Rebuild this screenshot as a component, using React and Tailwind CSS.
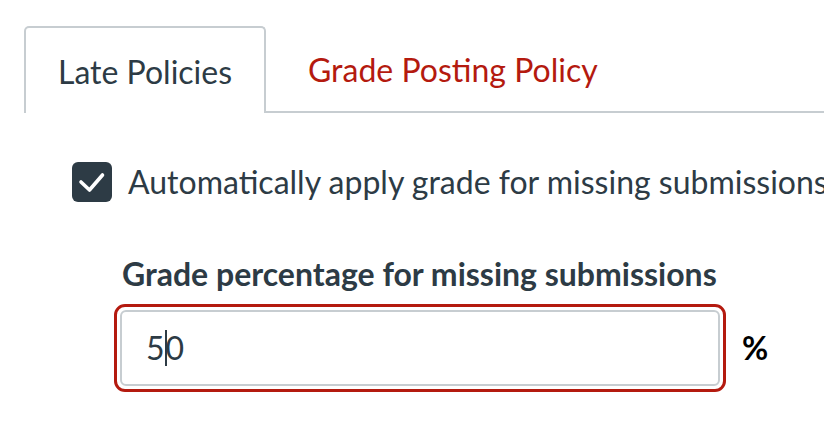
export default function App() {
  return (
    <div className="w-[824px] h-[442px] bg-white overflow-hidden" style={{ fontFamily: "Lato, 'Noto Sans', sans-serif" }}>
      <div className="pt-[26px] pl-[24px] flex items-end">
        <div className="h-[87px] w-[242px] border-[2px] border-b-0 border-[#c7cdd1] rounded-t-[5px] flex items-center justify-center text-[32px] leading-[40px] text-[#2d3b45] pt-[2px]">
          Late Policies
        </div>
        <div className="flex-1 h-[87px] border-b-[2px] border-[#c7cdd1] flex items-center pl-[42px] pt-[2px] text-[32px] leading-[40px] text-[#b41a0f]">
          Grade Posting Policy
        </div>
      </div>
      <div className="pl-[72px] pt-[49px] flex items-center gap-[16px]">
        <div className="w-[40px] h-[40px] rounded-[6px] bg-[#2d3b45] flex items-center justify-center shrink-0">
          <svg width="40" height="40" viewBox="0 0 40 40">
            <path d="M9 20 L17.5 28 L30.5 13" fill="none" stroke="white" strokeWidth="3.6" strokeLinecap="round" strokeLinejoin="round" />
          </svg>
        </div>
        <div className="text-[32px] leading-[40px] text-[#2d3b45] whitespace-nowrap">Automatically apply grade for missing submissions</div>
      </div>
      <div className="pl-[122px] pt-[52px] text-[32px] font-bold text-[#2d3b45] whitespace-nowrap leading-[40px]">
        Grade percentage for missing submissions
      </div>
      <div className="pl-[114px] pt-[10px] flex items-center">
        <div className="w-[612px] h-[88px] border-[3.5px] border-[#b41a0f] rounded-[11px] p-[3px]">
          <div className="w-full h-full border-[2px] border-[#c7cdd1] rounded-[6px] flex items-center pl-[24px] text-[32px] text-[#2d3b45]">
            <span>5</span>
            <span className="inline-block w-[2px] h-[36px] bg-[#2d3b45] -mr-[1px]"></span>
            <span>0</span>
          </div>
        </div>
        <div className="pl-[16px] text-[32px] font-bold text-black">%</div>
      </div>
    </div>
  );
}
